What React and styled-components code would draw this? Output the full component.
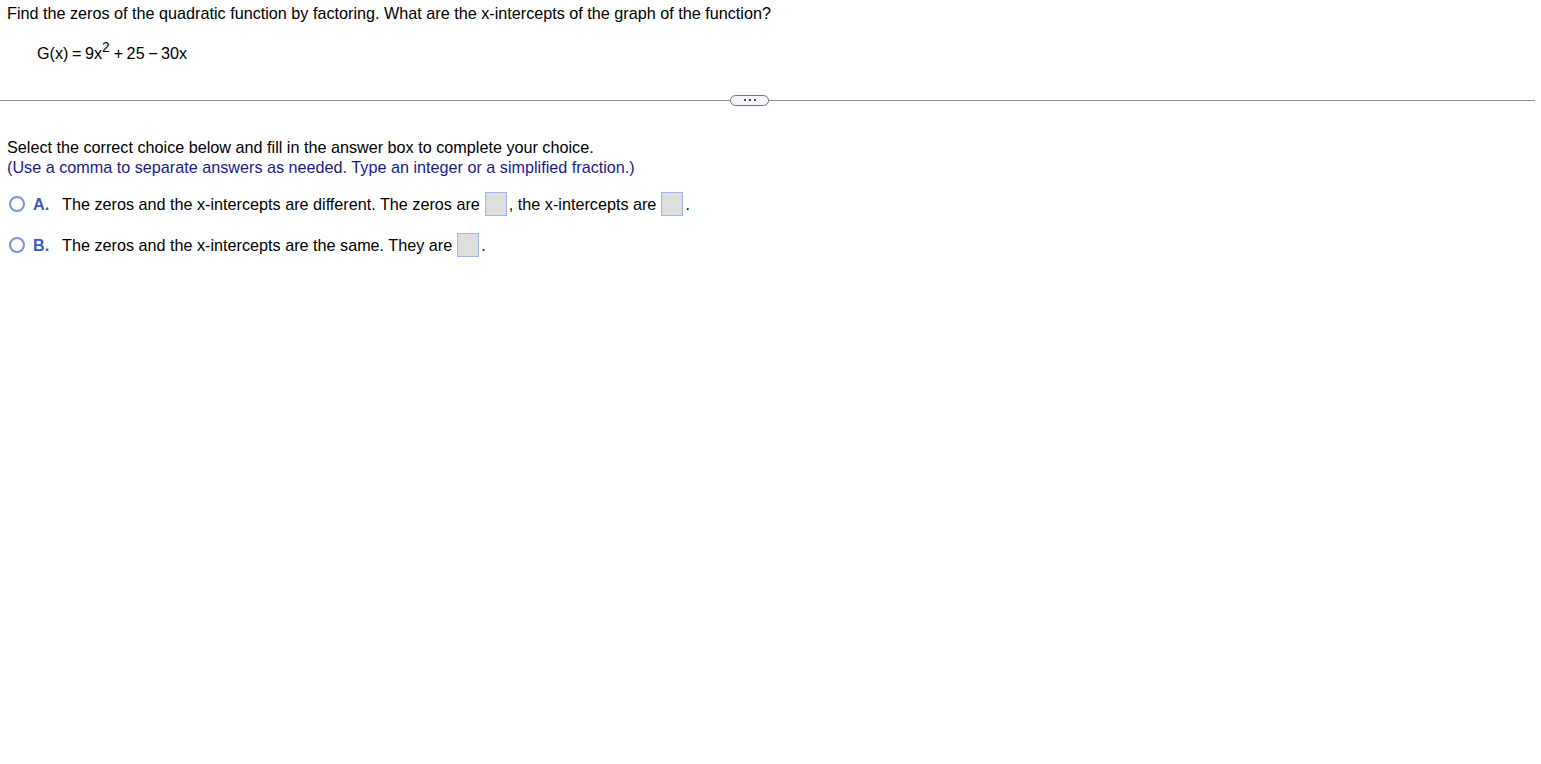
import { styled, createGlobalStyle } from "styled-components";

const Global = createGlobalStyle`
  body {
    margin: 0;
    background: #ffffff;
    font-family: "Liberation Sans", Arial, sans-serif;
    font-size: 16.2px;
    color: #000000;
  }
`;

const Page = styled.div`
  padding: 4px 0 0 7px;
  width: 1528px;
`;

const Question = styled.div`
  line-height: 18px;
`;

const Formula = styled.div`
  padding: 22px 0 0 30px;
  line-height: 18px;
  word-spacing: -1px;
  sup {
    font-size: 0.85em;
    line-height: 0;
    vertical-align: 0.5em;
    margin-right: 4px;
  }
`;

const Divider = styled.div`
  display: flex;
  align-items: center;
  margin: 32px 0 0 -7px;
  height: 12px;
`;

const Rule = styled.div`
  flex: ${(p) => (p.$fixed ? "0 0 730px" : "1")};
  height: 1px;
  background: #8a919c;
`;

const Pill = styled.div`
  width: 37px;
  height: 9px;
  border: 1px solid #6b7480;
  border-radius: 6px;
  background: #f2f5f9;
  display: flex;
  align-items: center;
  justify-content: center;
  gap: 3px;
  span {
    width: 2px;
    height: 2px;
    background: #434a55;
  }
`;

const Instructions = styled.div`
  margin-top: 31px;
  line-height: 20px;
`;

const Hint = styled.div`
  color: #1c1a8c;
`;

const Options = styled.div`
  margin-top: 15px;
  display: flex;
  flex-direction: column;
  gap: 17px;
`;

const Option = styled.div`
  display: flex;
  align-items: center;
  height: 24px;
`;

const Radio = styled.span`
  width: 12px;
  height: 12px;
  border: 2px solid #7e90dd;
  border-radius: 50%;
  margin: 0 8px 0 2px;
  flex-shrink: 0;
`;

const Letter = styled.span`
  color: #3b58c8;
  font-weight: bold;
  width: 29px;
`;

const AnswerBox = styled.span`
  display: inline-block;
  width: 20px;
  height: 22px;
  border: 1px solid #9fb7e6;
  background: #dedede;
  vertical-align: middle;
  margin: 0 2px 0 5px;
`;

const Text = styled.span`
  display: flex;
  align-items: center;
  white-space: pre;
`;

export default function App() {
  return (
    <>
      <Global />
      <Page>
        <Question>
          Find the zeros of the quadratic function by factoring. What are the
          x-intercepts of the graph of the function?
        </Question>
        <Formula>
          G(x) = 9x<sup>2</sup>+ 25 − 30x
        </Formula>
        <Divider>
          <Rule $fixed />
          <Pill>
            <span />
            <span />
            <span />
          </Pill>
          <Rule />
        </Divider>
        <Instructions>
          <div>
            Select the correct choice below and fill in the answer box to
            complete your choice.
          </div>
          <Hint>
            (Use a comma to separate answers as needed. Type an integer or a
            simplified fraction.)
          </Hint>
        </Instructions>
        <Options>
          <Option>
            <Radio />
            <Letter>A.</Letter>
            <Text>
              The zeros and the x-intercepts are different. The zeros are
              <AnswerBox />, the x-intercepts are<AnswerBox />.
            </Text>
          </Option>
          <Option>
            <Radio />
            <Letter>B.</Letter>
            <Text>
              The zeros and the x-intercepts are the same. They are
              <AnswerBox />.
            </Text>
          </Option>
        </Options>
      </Page>
    </>
  );
}
